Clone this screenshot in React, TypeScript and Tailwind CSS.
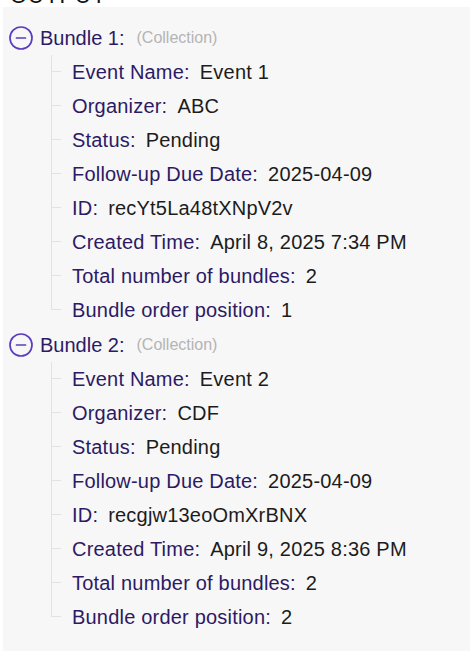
import React from 'react';

type Field = { label: string; value: string };

const bundles: { title: string; fields: Field[] }[] = [
  {
    title: 'Bundle 1:',
    fields: [
      { label: 'Event Name:', value: 'Event 1' },
      { label: 'Organizer:', value: 'ABC' },
      { label: 'Status:', value: 'Pending' },
      { label: 'Follow-up Due Date:', value: '2025-04-09' },
      { label: 'ID:', value: 'recYt5La48tXNpV2v' },
      { label: 'Created Time:', value: 'April 8, 2025 7:34 PM' },
      { label: 'Total number of bundles:', value: '2' },
      { label: 'Bundle order position:', value: '1' },
    ],
  },
  {
    title: 'Bundle 2:',
    fields: [
      { label: 'Event Name:', value: 'Event 2' },
      { label: 'Organizer:', value: 'CDF' },
      { label: 'Status:', value: 'Pending' },
      { label: 'Follow-up Due Date:', value: '2025-04-09' },
      { label: 'ID:', value: 'recgjw13eoOmXrBNX' },
      { label: 'Created Time:', value: 'April 9, 2025 8:36 PM' },
      { label: 'Total number of bundles:', value: '2' },
      { label: 'Bundle order position:', value: '2' },
    ],
  },
];

function CollapseIcon() {
  return (
    <svg width="26" height="26" viewBox="0 0 26 26" fill="none" className="shrink-0">
      <circle cx="13" cy="13" r="11" stroke="#5a3dbf" strokeWidth="1.7" />
      <line x1="8.5" y1="13" x2="17.5" y2="13" stroke="#5a3dbf" strokeWidth="1.7" strokeLinecap="round" />
    </svg>
  );
}

function FieldRow({ field, last }: { field: Field; last: boolean }) {
  return (
    <div className="flex h-[34px] items-stretch">
      <div className="w-[21px] shrink-0 flex flex-col">
        <div className="h-[17px] w-[10px] border-l border-b border-[#e2e2e2]" />
        <div className={`h-[17px] w-[10px] ${last ? '' : 'border-l border-[#e2e2e2]'}`} />
      </div>
      <div className="flex items-center whitespace-nowrap text-[20px] tracking-[0.2px]">
        <span className="text-[#2c1a64]">{field.label}</span>
        <span className="ml-[10px] text-[#1c1c1c]">{field.value}</span>
      </div>
    </div>
  );
}

export default function App() {
  return (
    <div
      className="w-[474px] h-[656px] overflow-hidden bg-white"
      style={{ fontFamily: '"Liberation Sans", Arial, sans-serif' }}
    >
      <div className="-mt-[15px] h-[22px] pl-[10px] text-[22px] leading-[22px] text-[#111] tracking-[1px]">
        OUTPUT
      </div>
      <div className="mx-[3px] w-[467px] bg-[#f7f7f7] pt-[14px] pb-[17px]">
        {bundles.map((b, i) => (
          <div key={b.title} className={i > 0 ? 'mt-px' : ''}>
            <div className="flex h-[34px] items-center pl-[5px]">
              <CollapseIcon />
              <span className="ml-[6px] text-[20px] text-[#2c1a64]">{b.title}</span>
              <span className="ml-[12px] text-[16px] text-[#b4b4b4]">(Collection)</span>
            </div>
            <div className="pl-[48px]">
              {b.fields.map((f, j) => (
                <FieldRow key={f.label} field={f} last={j === b.fields.length - 1} />
              ))}
            </div>
          </div>
        ))}
      </div>
      <div className="pl-[10px] pt-[2px] text-[22px] leading-[22px] text-[#111]">Segments</div>
    </div>
  );
}
